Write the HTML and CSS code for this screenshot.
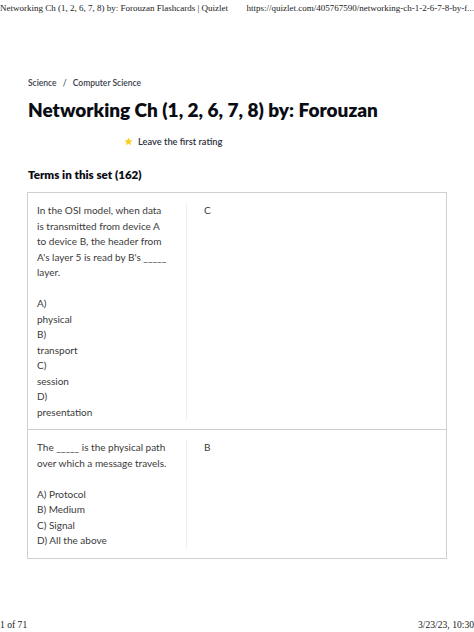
FILE: index.html
```html
<!DOCTYPE html>
<html lang="en">
<head>
    <meta charset="UTF-8">
    <meta name="viewport" content="width=device-width, initial-scale=1.0">
    <title>Networking Ch (1, 2, 6, 7, 8) by: Forouzan Flashcards | Quizlet</title>
    <link rel="stylesheet" href="styles.css">
</head>
<body>
<div class="print-head">
    <span>Networking Ch (1, 2, 6, 7, 8) by: Forouzan Flashcards | Quizlet</span>
    <span class="url">https://quizlet.com/405767590/networking-ch-1-2-6-7-8-by-f...</span>
</div>

<div class="page">
    <div class="crumbs">Science <span class="sep">/</span> Computer Science</div>
    <h1>Networking Ch (1, 2, 6, 7, 8) by: Forouzan</h1>

    <div class="rating">
        <svg class="star" viewBox="0 0 24 24" width="9" height="9">
            <path d="M12 1.5l3.2 6.9 7.5.8-5.6 5.1 1.6 7.4L12 17.9l-6.7 3.8 1.6-7.4L1.3 9.2l7.5-.8z" fill="#ffcd1f"/>
        </svg>
        <span>Leave the first rating</span>
    </div>

    <h2>Terms in this set (162)</h2>

    <div class="cards">
        <div class="card">
            <div class="term">
                <p>In the OSI model, when data is transmitted from device A to device B, the header from A's layer 5 is read by B's _____ layer.</p>
                <p>A)<br>physical<br>B)<br>transport<br>C)<br>session<br>D)<br>presentation</p>
            </div>
            <div class="definition">C</div>
        </div>
        <div class="card">
            <div class="term">
                <p>The _____ is the physical path over which a message travels.</p>
                <p>A) Protocol<br>B) Medium<br>C) Signal<br>D) All the above</p>
            </div>
            <div class="definition">B</div>
        </div>
    </div>
</div>

<div class="print-foot">
    <span>1 of 71</span>
    <span>3/23/23, 10:30</span>
</div>
</body>
</html>
```

FILE: styles.css
```css
body {
    margin: 0;
    padding: 0;
    background: white;
    color: #1a1d28;
    font-family: Lato, "Noto Sans", sans-serif;
    width: 474px;
    height: 632px;
    position: relative;
    overflow: hidden;
}
.print-head,
.print-foot {
    display: flex;
    justify-content: space-between;
    font-family: "Liberation Serif", serif;
    font-size: 9px;
    color: #222;
    white-space: nowrap;
}
.print-head {
    padding-top: 3px;
}
.print-foot {
    position: absolute;
    left: 0;
    right: 0;
    bottom: 2px;
    font-size: 9.6px;
}
.page {
    margin: 0 28px 0 28px;
    padding-top: 65px;
}
.crumbs {
    font-size: 8.5px;
    color: #3a3e4c;
    font-weight: 600;
}
.crumbs .sep {
    margin: 0 4px;
}
h1 {
    margin: 10px 0 0 0;
    font-size: 19px;
    font-weight: 800;
    color: #0b0d14;
}
.rating {
    display: flex;
    align-items: center;
    gap: 5px;
    margin: 15px 0 0 96px;
    font-size: 9.3px;
    color: #2e3240;
    font-weight: 600;
}
h2 {
    margin: 21px 0 0 0;
    font-size: 11.6px;
    font-weight: 800;
    color: #0b0d14;
}
.cards {
    margin-top: 11px;
    width: 418px;
    margin-left: -1px;
    border: 1px solid #d0d0d0;
}
.card {
    display: flex;
    padding: 10px 0 9px 9px;
    border-top: 1px solid #cfcfcf;
}
.card:first-child {
    border-top: none;
}
.term {
    width: 130px;
    padding-right: 19px;
    border-right: 1px solid #f0f0f0;
    font-size: 10px;
    line-height: 15.5px;
    color: #3a3a3a;
}
.term p {
    margin: 0;
}
.term p + p {
    margin-top: 15.5px;
}
.definition {
    padding-left: 17px;
    font-size: 10px;
    line-height: 15.5px;
    color: #3a3a3a;
}
```
